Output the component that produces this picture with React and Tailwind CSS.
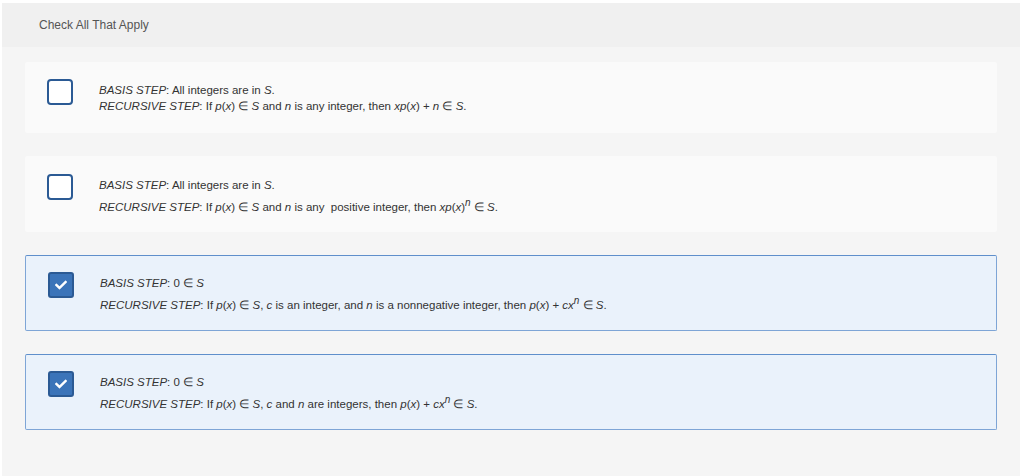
const V = ({ children }) => <i className="italic">{children}</i>;

const OPTIONS = [
  {
    checked: false,
    tight: true,
    basis: <>All integers are in <V>S</V>.</>,
    rec: (
      <>
        If <V>p</V>(<V>x</V>) ∈ <V>S</V> and <V>n</V> is any integer, then <V>xp</V>(<V>x</V>) + <V>n</V> ∈ <V>S</V>.
      </>
    ),
  },
  {
    checked: false,
    basis: <>All integers are in <V>S</V>.</>,
    rec: (
      <>
        If <V>p</V>(<V>x</V>) ∈ <V>S</V> and <V>n</V> is any&nbsp; positive integer, then <V>xp</V>(<V>x</V>)
        <sup className="text-[10px] italic">n</sup> ∈ <V>S</V>.
      </>
    ),
  },
  {
    checked: true,
    basis: <>0 ∈ <V>S</V></>,
    rec: (
      <>
        If <V>p</V>(<V>x</V>) ∈ <V>S</V>, <V>c</V> is an integer, and <V>n</V> is a nonnegative integer, then <V>p</V>(<V>x</V>) + <V>cx</V>
        <sup className="text-[10px] italic">n</sup> ∈ <V>S</V>.
      </>
    ),
  },
  {
    checked: true,
    basis: <>0 ∈ <V>S</V></>,
    rec: (
      <>
        If <V>p</V>(<V>x</V>) ∈ <V>S</V>, <V>c</V> and <V>n</V> are integers, then <V>p</V>(<V>x</V>) + <V>cx</V>
        <sup className="text-[10px] italic">n</sup> ∈ <V>S</V>.
      </>
    ),
  },
];

function Box({ checked }) {
  if (checked) {
    return (
      <div className="w-[26px] h-[26px] shrink-0 rounded-[3px] border-2 border-[#2b5a94] bg-[#3b74b9] flex items-center justify-center">
        <svg viewBox="0 0 512 512" className="w-[12px] h-[12px]" fill="white">
          <path d="M173.898 439.404l-166.4-166.4c-9.997-9.997-9.997-26.206 0-36.204l36.203-36.204c9.997-9.998 26.207-9.998 36.204 0L192 312.69 432.095 72.596c9.997-9.997 26.207-9.997 36.204 0l36.203 36.204c9.997 9.997 9.997 26.206 0 36.204l-294.4 294.401c-9.998 9.997-26.207 9.997-36.204-.001z" />
        </svg>
      </div>
    );
  }
  return <div className="w-[26px] h-[26px] shrink-0 rounded-[4px] border-2 border-[#2b5a94] bg-white" />;
}

export default function App() {
  return (
    <div
      className="min-h-[476px] bg-white pl-[2px] pr-[4px] pt-[3px]"
      style={{ fontFamily: '"Liberation Sans", Arial, sans-serif' }}
    >
      <div className="bg-[#f5f5f5] min-h-[473px]">
        <div className="bg-[#f0f0f0] h-[44px] pl-[37px] flex items-center text-[12px] text-[#555]">Check All That Apply</div>

        <div className="px-[23px] pt-[15px] flex flex-col gap-[23px]">
          {OPTIONS.map((opt, i) => (
            <div
              key={i}
              className={
                'flex items-start pl-[22px] rounded-[2px] ' +
                (opt.checked
                  ? 'bg-[#eaf2fb] border border-[#7ea5d6] border-t-[#5f8fcb] pt-[16px] h-[76px]'
                  : 'bg-[#fafafa] ' + (opt.tight ? 'pt-[17px] h-[71px]' : 'pt-[18px] h-[76px]'))
              }
            >
              <Box checked={opt.checked} />
              <div
                className={
                  'ml-[26px] text-[11.5px] text-[#333] ' + (opt.tight ? 'leading-[16px] pt-[3px]' : 'leading-[22px]')
                }
              >
                <div>
                  <i>BASIS STEP</i>: {opt.basis}
                </div>
                <div>
                  <i>RECURSIVE STEP</i>: {opt.rec}
                </div>
              </div>
            </div>
          ))}
        </div>
      </div>
    </div>
  );
}
